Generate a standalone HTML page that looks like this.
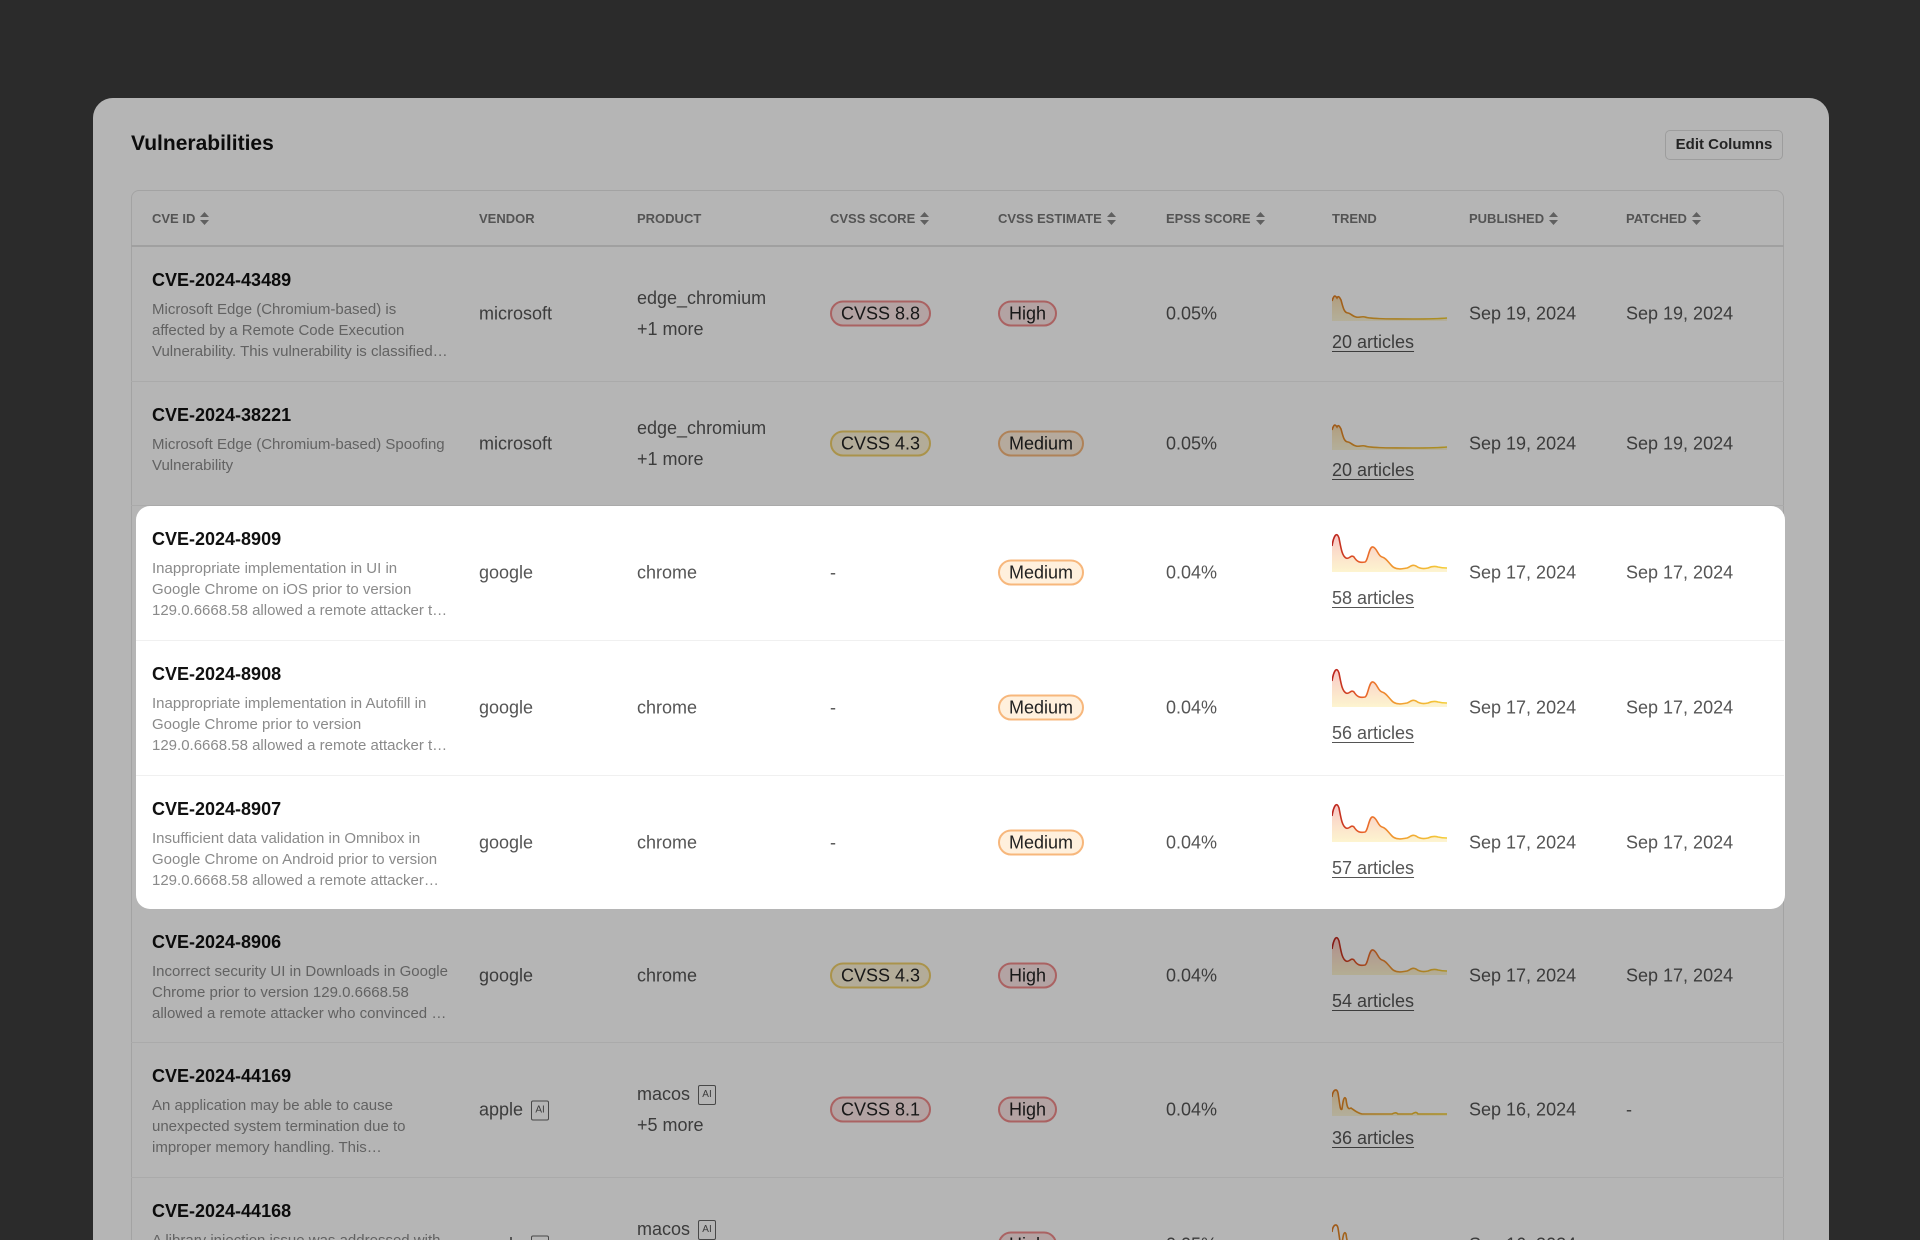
<!DOCTYPE html>
<html><head><meta charset="utf-8">
<style>
*{box-sizing:border-box;margin:0;padding:0}
html,body{width:1920px;height:1240px;overflow:hidden;background:#2b2b2b;font-family:"Liberation Sans",Arial,sans-serif}
.card{position:absolute;left:93px;top:98px;width:1736px;height:1142px;background:#fff;border-radius:20px 20px 0 0;overflow:hidden}
.ov{position:absolute;left:0;top:0;width:100%;height:100%;background:rgba(0,0,0,0.29);z-index:5}
.title{position:absolute;left:38px;top:34px;font-size:21px;font-weight:bold;color:#111}
.btn{position:absolute;left:1572px;top:32px;width:118px;height:30px;border:1px solid #ddd;border-radius:5px;font-size:15px;font-weight:bold;color:#333;text-align:center;line-height:28px}
.tbl{position:absolute;left:38px;top:92px;width:1653px;height:1200px;border:1px solid #e6e6e6;border-radius:8px}
.hdr{position:absolute;left:38px;top:92px;width:1653px;height:57px;border-bottom:2px solid #e2e2e2}
.hdr .h{margin-left:-38px}
.h{position:absolute;top:21px;font-size:13px;font-weight:bold;color:#777;white-space:nowrap}
.h svg{vertical-align:-2px;margin-left:5px}
.row{position:absolute;left:38px;width:1653px;border-bottom:1px solid #f0f0f0}
.row .c{margin-left:-38px}
.c{position:absolute;white-space:nowrap}
.id{left:59px;top:23px;font-size:18px;font-weight:bold;color:#111}
.d{left:59px;top:53px;font-size:15px;line-height:20.8px;color:#8a8a8a}
.m{font-size:18px;color:#555;transform:translateY(-50%);top:50%;line-height:31px}
.b{display:inline-block;height:26px;line-height:22px;padding:0 9px;border-radius:13px;border:2px solid;font-size:18px;color:#222}
.red{border-color:#f08a8a;background:#fde6e6}
.yel{border-color:#f0cf6a;background:#fdf3d8}
.org{border-color:#f7b77c;background:#fff0dd}
.ai{display:inline-block;width:18px;height:20px;border:1.5px solid #666;border-radius:2px;font-size:10px;line-height:17px;text-align:center;vertical-align:3px;margin-left:8px;color:#555}
.lnk{font-size:18px;color:#555;text-decoration:underline;text-underline-offset:3px}
.hl{position:absolute;left:43px;top:408px;width:1649px;height:403px;background:#fff;border-radius:14px;z-index:6;overflow:hidden}
.hl .row{left:-5px}
</style></head><body>
<svg width="0" height="0" style="position:absolute">
<defs>
<linearGradient id="sr" x1="0" y1="0" x2="1" y2="0"><stop offset="0" stop-color="#b8201c"/><stop offset="0.25" stop-color="#e8602a"/><stop offset="0.55" stop-color="#f09a30"/><stop offset="1" stop-color="#f4cf3a"/></linearGradient>
<linearGradient id="fr" x1="0" y1="0" x2="0" y2="1"><stop offset="0" stop-color="#f4a0a0" stop-opacity="0.6"/><stop offset="1" stop-color="#fbe9a0" stop-opacity="0.5"/></linearGradient>
<linearGradient id="sy" x1="0" y1="0" x2="1" y2="0"><stop offset="0" stop-color="#e07a20"/><stop offset="0.3" stop-color="#eda830"/><stop offset="1" stop-color="#f2cc30"/></linearGradient>
<linearGradient id="fy" x1="0" y1="0" x2="0" y2="1"><stop offset="0" stop-color="#f4c070" stop-opacity="0.55"/><stop offset="1" stop-color="#fbe9a0" stop-opacity="0.4"/></linearGradient>
</defs></svg>

<div class="card">
<div class="title">Vulnerabilities</div>
<div class="btn">Edit Columns</div>
<div class="tbl"></div>
<div class="hdr">
<div class="h" style="left:59px">CVE ID<svg width="9" height="13" viewBox="0 0 9 13"><path d="M4.5 0L9 5H0z M4.5 13L0 8H9z" fill="#888"/></svg></div>
<div class="h" style="left:386px">VENDOR</div>
<div class="h" style="left:544px">PRODUCT</div>
<div class="h" style="left:737px">CVSS SCORE<svg width="9" height="13" viewBox="0 0 9 13"><path d="M4.5 0L9 5H0z M4.5 13L0 8H9z" fill="#888"/></svg></div>
<div class="h" style="left:905px">CVSS ESTIMATE<svg width="9" height="13" viewBox="0 0 9 13"><path d="M4.5 0L9 5H0z M4.5 13L0 8H9z" fill="#888"/></svg></div>
<div class="h" style="left:1073px">EPSS SCORE<svg width="9" height="13" viewBox="0 0 9 13"><path d="M4.5 0L9 5H0z M4.5 13L0 8H9z" fill="#888"/></svg></div>
<div class="h" style="left:1239px">TREND</div>
<div class="h" style="left:1376px">PUBLISHED<svg width="9" height="13" viewBox="0 0 9 13"><path d="M4.5 0L9 5H0z M4.5 13L0 8H9z" fill="#888"/></svg></div>
<div class="h" style="left:1533px">PATCHED<svg width="9" height="13" viewBox="0 0 9 13"><path d="M4.5 0L9 5H0z M4.5 13L0 8H9z" fill="#888"/></svg></div>
</div>

<div class="row" style="top:149px;height:135px">
<div class="c id">CVE-2024-43489</div>
<div class="c d">Microsoft Edge (Chromium-based) is<br>affected by a Remote Code Execution<br>Vulnerability. This vulnerability is classified…</div>
<div class="c m" style="left:386px">microsoft</div>
<div class="c m" style="left:544px">edge_chromium<br>+1 more</div>
<div class="c m" style="left:737px"><span class="b red">CVSS 8.8</span></div>
<div class="c m" style="left:905px"><span class="b red">High</span></div>
<div class="c m" style="left:1073px">0.05%</div>
<svg class="c" style="left:1239px;top:46px" width="116" height="32" viewBox="0 0 116 32"><path d="M0,8 C2,2 3,2 5,5 C6,3 7,3 9,7 C11,14 12,20 16,20 C18,20 20,23 24,24 C27,25 30,23 33,24 C38,26 60,26 80,26 C95,26 105,26 115,25 L115,28 L0,28Z" fill="url(#fy)"/><path d="M0,8 C2,2 3,2 5,5 C6,3 7,3 9,7 C11,14 12,20 16,20 C18,20 20,23 24,24 C27,25 30,23 33,24 C38,26 60,26 80,26 C95,26 105,26 115,25" fill="none" stroke="url(#sy)" stroke-width="1.6"/></svg>
<div class="c lnk" style="left:1239px;top:85px">20 articles</div>
<div class="c m" style="left:1376px">Sep 19, 2024</div>
<div class="c m" style="left:1533px">Sep 19, 2024</div>
</div>

<div class="row" style="top:284px;height:124px">
<div class="c id">CVE-2024-38221</div>
<div class="c d">Microsoft Edge (Chromium-based) Spoofing<br>Vulnerability</div>
<div class="c m" style="left:386px">microsoft</div>
<div class="c m" style="left:544px">edge_chromium<br>+1 more</div>
<div class="c m" style="left:737px"><span class="b yel">CVSS 4.3</span></div>
<div class="c m" style="left:905px"><span class="b org">Medium</span></div>
<div class="c m" style="left:1073px">0.05%</div>
<svg class="c" style="left:1239px;top:40px" width="116" height="32" viewBox="0 0 116 32"><path d="M0,8 C2,2 3,2 5,5 C6,3 7,3 9,7 C11,14 12,20 16,20 C18,20 20,23 24,24 C27,25 30,23 33,24 C38,26 60,26 80,26 C95,26 105,26 115,25 L115,28 L0,28Z" fill="url(#fy)"/><path d="M0,8 C2,2 3,2 5,5 C6,3 7,3 9,7 C11,14 12,20 16,20 C18,20 20,23 24,24 C27,25 30,23 33,24 C38,26 60,26 80,26 C95,26 105,26 115,25" fill="none" stroke="url(#sy)" stroke-width="1.6"/></svg>
<div class="c lnk" style="left:1239px;top:78px">20 articles</div>
<div class="c m" style="left:1376px">Sep 19, 2024</div>
<div class="c m" style="left:1533px">Sep 19, 2024</div>
</div>

<div class="row" style="top:811px;height:134px">
<div class="c id">CVE-2024-8906</div>
<div class="c d">Incorrect security UI in Downloads in Google<br>Chrome prior to version 129.0.6668.58<br>allowed a remote attacker who convinced …</div>
<div class="c m" style="left:386px">google</div>
<div class="c m" style="left:544px">chrome</div>
<div class="c m" style="left:737px"><span class="b yel">CVSS 4.3</span></div>
<div class="c m" style="left:905px"><span class="b red">High</span></div>
<div class="c m" style="left:1073px">0.04%</div>
<svg class="c" style="left:1239px;top:24px" width="116" height="46" viewBox="0 0 116 46"><path d="M0,16 C2,4 5,2 7,8 C9,18 10,26 14,28 C17,30 19,24 22,27 C25,32 28,33 33,32 C36,31 37,16 41,17 C45,18 46,26 50,27 C54,28 56,32 60,36 C64,40 70,39 75,38 C78,37 80,34 84,36 C88,39 92,39 96,38 C100,36 103,36 106,37 C110,38 113,38 115,38 L115,42 L0,42Z" fill="url(#fr)"/><path d="M0,16 C2,4 5,2 7,8 C9,18 10,26 14,28 C17,30 19,24 22,27 C25,32 28,33 33,32 C36,31 37,16 41,17 C45,18 46,26 50,27 C54,28 56,32 60,36 C64,40 70,39 75,38 C78,37 80,34 84,36 C88,39 92,39 96,38 C100,36 103,36 106,37 C110,38 113,38 115,38" fill="none" stroke="url(#sr)" stroke-width="1.6"/></svg>
<div class="c lnk" style="left:1239px;top:82px">54 articles</div>
<div class="c m" style="left:1376px">Sep 17, 2024</div>
<div class="c m" style="left:1533px">Sep 17, 2024</div>
</div>

<div class="row" style="top:945px;height:135px">
<div class="c id">CVE-2024-44169</div>
<div class="c d">An application may be able to cause<br>unexpected system termination due to<br>improper memory handling. This…</div>
<div class="c m" style="left:386px">apple<span class="ai">AI</span></div>
<div class="c m" style="left:544px">macos<span class="ai">AI</span><br>+5 more</div>
<div class="c m" style="left:737px"><span class="b red">CVSS 8.1</span></div>
<div class="c m" style="left:905px"><span class="b red">High</span></div>
<div class="c m" style="left:1073px">0.04%</div>
<svg class="c" style="left:1239px;top:44px" width="116" height="32" viewBox="0 0 116 32"><path d="M0,10 C1,2 5,1 6,6 C8,18 8,24 10,22 C11,14 12,8 14,12 C15,20 16,23 19,21 C22,23 25,26 30,27 L60,27 C62,26 64,25 66,27 L80,27 C82,26 84,24 86,27 L115,27 L115,29 L0,29Z" fill="url(#fy)"/><path d="M0,10 C1,2 5,1 6,6 C8,18 8,24 10,22 C11,14 12,8 14,12 C15,20 16,23 19,21 C22,23 25,26 30,27 L60,27 C62,26 64,25 66,27 L80,27 C82,26 84,24 86,27 L115,27" fill="none" stroke="url(#sy)" stroke-width="1.6"/></svg>
<div class="c lnk" style="left:1239px;top:85px">36 articles</div>
<div class="c m" style="left:1376px">Sep 16, 2024</div>
<div class="c m" style="left:1533px">-</div>
</div>

<div class="row" style="top:1080px;height:135px">
<div class="c id">CVE-2024-44168</div>
<div class="c d">A library injection issue was addressed with<br>additional restrictions. This issue is fixed in<br>macOS Sequoia 15…</div>
<div class="c m" style="left:386px">apple<span class="ai">AI</span></div>
<div class="c m" style="left:544px">macos<span class="ai">AI</span><br>+5 more</div>
<div class="c m" style="left:905px"><span class="b red">High</span></div>
<div class="c m" style="left:1073px">0.05%</div>
<svg class="c" style="left:1239px;top:44px" width="116" height="32" viewBox="0 0 116 32"><path d="M0,10 C1,2 5,1 6,6 C8,18 8,24 10,22 C11,14 12,8 14,12 C15,20 16,23 19,21 C22,23 25,26 30,27 L115,27" fill="none" stroke="url(#sy)" stroke-width="1.6"/></svg>
<div class="c m" style="left:1376px">Sep 16, 2024</div>
</div>

<div class="ov"></div>

<div class="hl">
<div class="row" style="top:0;height:135px">
<div class="c id">CVE-2024-8909</div>
<div class="c d">Inappropriate implementation in UI in<br>Google Chrome on iOS prior to version<br>129.0.6668.58 allowed a remote attacker t…</div>
<div class="c m" style="left:386px">google</div>
<div class="c m" style="left:544px">chrome</div>
<div class="c m" style="left:737px">-</div>
<div class="c m" style="left:905px"><span class="b org">Medium</span></div>
<div class="c m" style="left:1073px">0.04%</div>
<svg class="c" style="left:1239px;top:24px" width="116" height="46" viewBox="0 0 116 46"><path d="M0,16 C2,4 5,2 7,8 C9,18 10,26 14,28 C17,30 19,24 22,27 C25,32 28,33 33,32 C36,31 37,16 41,17 C45,18 46,26 50,27 C54,28 56,32 60,36 C64,40 70,39 75,38 C78,37 80,34 84,36 C88,39 92,39 96,38 C100,36 103,36 106,37 C110,38 113,38 115,38 L115,42 L0,42Z" fill="url(#fr)"/><path d="M0,16 C2,4 5,2 7,8 C9,18 10,26 14,28 C17,30 19,24 22,27 C25,32 28,33 33,32 C36,31 37,16 41,17 C45,18 46,26 50,27 C54,28 56,32 60,36 C64,40 70,39 75,38 C78,37 80,34 84,36 C88,39 92,39 96,38 C100,36 103,36 106,37 C110,38 113,38 115,38" fill="none" stroke="url(#sr)" stroke-width="1.6"/></svg>
<div class="c lnk" style="left:1239px;top:82px">58 articles</div>
<div class="c m" style="left:1376px">Sep 17, 2024</div>
<div class="c m" style="left:1533px">Sep 17, 2024</div>
</div>
<div class="row" style="top:135px;height:135px">
<div class="c id">CVE-2024-8908</div>
<div class="c d">Inappropriate implementation in Autofill in<br>Google Chrome prior to version<br>129.0.6668.58 allowed a remote attacker t…</div>
<div class="c m" style="left:386px">google</div>
<div class="c m" style="left:544px">chrome</div>
<div class="c m" style="left:737px">-</div>
<div class="c m" style="left:905px"><span class="b org">Medium</span></div>
<div class="c m" style="left:1073px">0.04%</div>
<svg class="c" style="left:1239px;top:24px" width="116" height="46" viewBox="0 0 116 46"><path d="M0,16 C2,4 5,2 7,8 C9,18 10,26 14,28 C17,30 19,24 22,27 C25,32 28,33 33,32 C36,31 37,16 41,17 C45,18 46,26 50,27 C54,28 56,32 60,36 C64,40 70,39 75,38 C78,37 80,34 84,36 C88,39 92,39 96,38 C100,36 103,36 106,37 C110,38 113,38 115,38 L115,42 L0,42Z" fill="url(#fr)"/><path d="M0,16 C2,4 5,2 7,8 C9,18 10,26 14,28 C17,30 19,24 22,27 C25,32 28,33 33,32 C36,31 37,16 41,17 C45,18 46,26 50,27 C54,28 56,32 60,36 C64,40 70,39 75,38 C78,37 80,34 84,36 C88,39 92,39 96,38 C100,36 103,36 106,37 C110,38 113,38 115,38" fill="none" stroke="url(#sr)" stroke-width="1.6"/></svg>
<div class="c lnk" style="left:1239px;top:82px">56 articles</div>
<div class="c m" style="left:1376px">Sep 17, 2024</div>
<div class="c m" style="left:1533px">Sep 17, 2024</div>
</div>
<div class="row" style="top:270px;height:133px;border-bottom:none">
<div class="c id">CVE-2024-8907</div>
<div class="c d">Insufficient data validation in Omnibox in<br>Google Chrome on Android prior to version<br>129.0.6668.58 allowed a remote attacker…</div>
<div class="c m" style="left:386px">google</div>
<div class="c m" style="left:544px">chrome</div>
<div class="c m" style="left:737px">-</div>
<div class="c m" style="left:905px"><span class="b org">Medium</span></div>
<div class="c m" style="left:1073px">0.04%</div>
<svg class="c" style="left:1239px;top:24px" width="116" height="46" viewBox="0 0 116 46"><path d="M0,16 C2,4 5,2 7,8 C9,18 10,26 14,28 C17,30 19,24 22,27 C25,32 28,33 33,32 C36,31 37,16 41,17 C45,18 46,26 50,27 C54,28 56,32 60,36 C64,40 70,39 75,38 C78,37 80,34 84,36 C88,39 92,39 96,38 C100,36 103,36 106,37 C110,38 113,38 115,38 L115,42 L0,42Z" fill="url(#fr)"/><path d="M0,16 C2,4 5,2 7,8 C9,18 10,26 14,28 C17,30 19,24 22,27 C25,32 28,33 33,32 C36,31 37,16 41,17 C45,18 46,26 50,27 C54,28 56,32 60,36 C64,40 70,39 75,38 C78,37 80,34 84,36 C88,39 92,39 96,38 C100,36 103,36 106,37 C110,38 113,38 115,38" fill="none" stroke="url(#sr)" stroke-width="1.6"/></svg>
<div class="c lnk" style="left:1239px;top:82px">57 articles</div>
<div class="c m" style="left:1376px">Sep 17, 2024</div>
<div class="c m" style="left:1533px">Sep 17, 2024</div>
</div>
</div>
</div>
</body></html>
